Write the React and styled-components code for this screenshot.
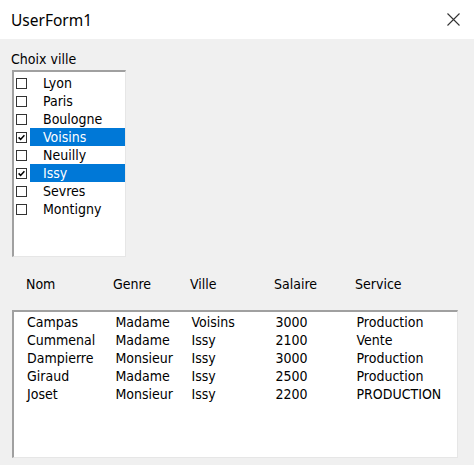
import styled, { createGlobalStyle } from "styled-components";

const GlobalStyle = createGlobalStyle`
  html, body {
    margin: 0;
    padding: 0;
    background: #f0f0f0;
  }
`;

const Window = styled.div`
  width: 474px;
  height: 465px;
  display: flex;
  flex-direction: column;
  overflow: hidden;
  font-family: "DejaVu Sans Condensed", "DejaVu Sans", sans-serif;
  font-stretch: condensed;
  font-size: 14px;
  color: #000;
`;

const TitleBar = styled.div`
  height: 39px;
  flex: none;
  background: #fff;
  display: flex;
  align-items: center;
  justify-content: space-between;
  padding: 0 14px 0 11px;
`;

const Title = styled.div`
  font-family: "Noto Sans", "Open Sans", sans-serif;
  font-stretch: normal;
  font-size: 15.5px;
  color: #000;
`;

const Body = styled.div`
  flex: 1;
  background: #f0f0f0;
  padding: 11px 0 0 12px;
  display: flex;
  flex-direction: column;
`;

const Label = styled.div`
  line-height: 18px;
  height: 18px;
  margin: 0 0 2px -1px;
`;

const CheckList = styled.div`
  width: 114px;
  height: 187px;
  box-sizing: border-box;
  background: #fff;
  border-top: 2px solid #a0a0a0;
  border-left: 2px solid #a0a0a0;
  border-right: 1px solid #e6e6e6;
  border-bottom: 1px solid #e6e6e6;
  padding-top: 2px;
`;

const CheckRow = styled.div`
  display: flex;
  align-items: center;
  height: 18px;
`;

const Box = styled.span`
  width: 9px;
  height: 9px;
  margin: 0 3px 0 2px;
  border: 1px solid #333;
  background: #fff;
  display: flex;
  align-items: center;
  justify-content: center;
  flex: none;
`;

const ItemText = styled.span`
  flex: 1;
  height: 18px;
  line-height: 18px;
  padding-left: 13px;
  background: ${(p) => (p.$selected ? "#0078d7" : "transparent")};
  color: ${(p) => (p.$selected ? "#fff" : "#000")};
`;

const HeaderRow = styled.div`
  display: grid;
  grid-template-columns: 87px 77px 84px 81px 1fr;
  height: 18px;
  line-height: 18px;
  margin-top: 18px;
  padding-left: 14px;
`;

const DataList = styled.div`
  width: 446px;
  height: 148px;
  box-sizing: border-box;
  margin-top: 17px;
  background: #fff;
  border-top: 2px solid #a0a0a0;
  border-left: 2px solid #a0a0a0;
  border-right: 1px solid #e6e6e6;
  border-bottom: 1px solid #e6e6e6;
  padding: 1px 0 0 13px;
`;

const DataRow = styled.div`
  display: grid;
  grid-template-columns: 88.5px 76px 84px 81px 1fr;
  height: 18px;
  line-height: 18px;
  white-space: nowrap;
`;

const CloseIcon = () => (
  <svg width="13" height="13" viewBox="0 0 13 13">
    <path d="M0.5 0.5 L12.5 12.5 M12.5 0.5 L0.5 12.5" stroke="#333" strokeWidth="1.1" fill="none" />
  </svg>
);

const Check = () => (
  <svg width="7" height="7" viewBox="0 0 7 7">
    <path d="M0.6 3.4 L2.6 5.4 L6.4 1.2" stroke="#000" strokeWidth="1.5" fill="none" />
  </svg>
);

const villes = [
  { name: "Lyon" },
  { name: "Paris" },
  { name: "Boulogne" },
  { name: "Voisins", checked: true },
  { name: "Neuilly" },
  { name: "Issy", checked: true },
  { name: "Sevres" },
  { name: "Montigny" },
];

const columns = ["Nom", "Genre", "Ville", "Salaire", "Service"];

const rows = [
  ["Campas", "Madame", "Voisins", "3000", "Production"],
  ["Cummenal", "Madame", "Issy", "2100", "Vente"],
  ["Dampierre", "Monsieur", "Issy", "3000", "Production"],
  ["Giraud", "Madame", "Issy", "2500", "Production"],
  ["Joset", "Monsieur", "Issy", "2200", "PRODUCTION"],
];

const App = () => (
  <Window>
    <GlobalStyle />
    <TitleBar>
      <Title>UserForm1</Title>
      <CloseIcon />
    </TitleBar>
    <Body>
      <Label>Choix ville</Label>
      <CheckList>
        {villes.map((v) => (
          <CheckRow key={v.name}>
            <Box>{v.checked && <Check />}</Box>
            <ItemText $selected={v.checked}>{v.name}</ItemText>
          </CheckRow>
        ))}
      </CheckList>
      <HeaderRow>
        {columns.map((c) => (
          <span key={c}>{c}</span>
        ))}
      </HeaderRow>
      <DataList>
        {rows.map((r) => (
          <DataRow key={r[0]}>
            {r.map((cell, i) => (
              <span key={i}>{cell}</span>
            ))}
          </DataRow>
        ))}
      </DataList>
    </Body>
  </Window>
);

export default App;
